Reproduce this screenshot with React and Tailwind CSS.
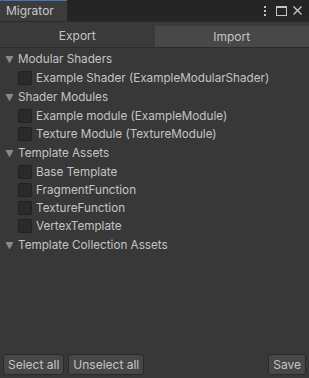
import { useState } from "react";

const sections = [
  { title: "Modular Shaders", items: ["Example Shader (ExampleModularShader)"] },
  { title: "Shader Modules", items: ["Example module (ExampleModule)", "Texture Module (TextureModule)"] },
  { title: "Template Assets", items: ["Base Template", "FragmentFunction", "TextureFunction", "VertexTemplate"] },
  { title: "Template Collection Assets", items: [] },
];

function Foldout({ title }) {
  return (
    <div className="flex h-[20px] items-center pt-[2px]">
      <svg width="18" height="20" viewBox="0 0 18 20" className="shrink-0">
        <path d="M5.5 6 L13.5 6 L9.5 13.5 Z" fill="#8a8a8a" />
      </svg>
      <span>{title}</span>
    </div>
  );
}

function Item({ label }) {
  const [on, setOn] = useState(false);
  return (
    <div className="flex h-[18px] items-center pl-[18px]" onClick={() => setOn(!on)}>
      <div className="h-[14px] w-[14px] shrink-0 rounded-[2px] border border-[#212121] bg-[#2a2a2a]" />
      <span className="ml-[4px] pt-[1px]">{label}</span>
    </div>
  );
}

function Btn({ children }) {
  return (
    <button className="h-[21px] rounded-[3px] border border-[#2a2a2a] bg-[#474747] px-[4px] text-[12px] text-[#c4c4c4]">
      {children}
    </button>
  );
}

export default function App() {
  const [tab, setTab] = useState("export");
  return (
    <div
      className="flex h-[378px] w-[309px] flex-col bg-[#383838] text-[11.7px] text-[#c4c4c4]"
      style={{ fontFamily: "Inter, 'Noto Sans', sans-serif" }}
    >
      {/* window tab bar */}
      <div className="flex h-[21px] shrink-0 items-stretch bg-[#252525]">
        <div className="flex w-[67px] flex-col bg-[#3c3c3c]">
          <div className="h-[1px] bg-[#3f74c0]" />
          <div className="flex flex-1 items-center pl-[6px] text-[12px] text-[#c8c8c8]">Migrator</div>
        </div>
        <div className="flex-1" />
        <div className="flex items-center gap-[6px] pr-[7px]">
          <svg width="4" height="10" viewBox="0 0 4 10">
            <rect x="1" y="0" width="2" height="2" fill="#c4c4c4" />
            <rect x="1" y="4" width="2" height="2" fill="#c4c4c4" />
            <rect x="1" y="8" width="2" height="2" fill="#c4c4c4" />
          </svg>
          <svg width="11" height="10" viewBox="0 0 11 10" className="ml-[3px]">
            <rect x="0.5" y="0.5" width="10" height="9" fill="none" stroke="#c4c4c4" />
            <rect x="0" y="0" width="11" height="2" fill="#c4c4c4" />
          </svg>
          <svg width="9" height="9" viewBox="0 0 9 9">
            <path d="M0.5 0.5 L8.5 8.5 M8.5 0.5 L0.5 8.5" stroke="#c4c4c4" strokeWidth="1.4" />
          </svg>
        </div>
      </div>

      {/* export / import toolbar */}
      <div className="flex h-[27px] shrink-0 border-t border-b border-[#2c2c2c] bg-[#3a3a3a]">
        <button
          onClick={() => setTab("export")}
          className={"flex-1 pt-[2px] text-[12px] text-[#c4c4c4] " + (tab === "export" ? "bg-[#3a3a3a]" : "mt-[4px] bg-[#484848]")}
        >
          Export
        </button>
        <button
          onClick={() => setTab("import")}
          className={"flex-1 text-[12px] text-[#c4c4c4] " + (tab === "import" ? "bg-[#3a3a3a]" : "mt-[4px] bg-[#484848]")}
        >
          Import
        </button>
      </div>

      {/* list */}
      <div className="flex flex-1 flex-col pt-[1px]">
        {sections.map((s) => (
          <div key={s.title}>
            <Foldout title={s.title} />
            {s.items.map((it) => (
              <Item key={it} label={it} />
            ))}
          </div>
        ))}
      </div>

      {/* footer */}
      <div className="flex items-center px-[3px] pb-[3px]">
        <Btn>Select all</Btn>
        <div className="ml-[4px]">
          <Btn>Unselect all</Btn>
        </div>
        <div className="flex-1" />
        <Btn>Save</Btn>
      </div>
    </div>
  );
}
